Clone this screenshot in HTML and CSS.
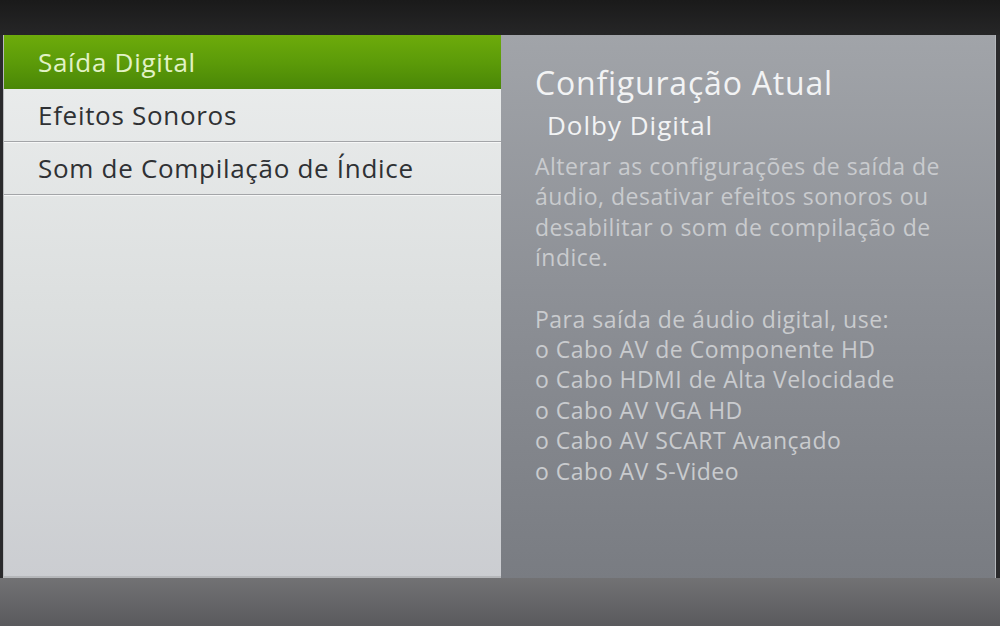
FILE: index.html
```html
<!DOCTYPE html>
<html lang="pt">
<head>
  <meta charset="UTF-8" />
  <title>Configurações de Áudio</title>
  <link rel="stylesheet" href="styles.css">
</head>
<body>

<div class="top-band"></div>

<main class="panel">
  <ul class="menu">
    <li class="menu-item active">Saída Digital</li>
    <li class="menu-item">Efeitos Sonoros</li>
    <li class="menu-item">Som de Compilação de Índice</li>
  </ul>

  <section class="details">
    <h2>Configuração Atual</h2>
    <p class="current">Dolby Digital</p>
    <p class="desc">Alterar as configurações de saída de áudio, desativar efeitos sonoros ou desabilitar o som de compilação de índice.</p>
    <p class="desc">
      Para saída de áudio digital, use:<br>
      o Cabo AV de Componente HD<br>
      o Cabo HDMI de Alta Velocidade<br>
      o Cabo AV VGA HD<br>
      o Cabo AV SCART Avançado<br>
      o Cabo AV S-Video
    </p>
  </section>
</main>

<div class="bottom-band"></div>

</body>
</html>
```

FILE: styles.css
```css
* {
  box-sizing: border-box;
  margin: 0;
  padding: 0;
}

body {
  width: 1000px;
  height: 626px;
  overflow: hidden;
  font-family: 'Open Sans', 'DejaVu Sans', sans-serif;
  background: #1f1f20;
}

.top-band {
  height: 35px;
  background: linear-gradient(#1a1a1a, #262627);
}

.panel {
  display: flex;
  height: 543px;
  padding-left: 3px;
  padding-right: 4px;
  background: #2a2a2c;
}

/* left list */
.menu {
  list-style: none;
  width: 498px;
  background: linear-gradient(#eceeee, #dcdfdf 50%, #cbcdd1);
  border-left: 1px solid #b8babc;
  box-shadow: inset 0 -2px 0 #b5b7ba;
}

.menu-item {
  height: 53px;
  line-height: 52px;
  padding-left: 34px;
  font-size: 26px;
  letter-spacing: 0.7px;
  color: #2f3134;
  border-bottom: 1px solid #a3a5a8;
  box-shadow: 0 1px 0 #f6f7f7;
}

.menu-item.active {
  height: 54px;
  line-height: 54px;
  background: linear-gradient(#6dab0b, #5c9b09 50%, #4a8707);
  color: #e2f2c6;
  border-bottom: none;
  box-shadow: none;
}

/* right side */
.details {
  flex: 1;
  padding: 28px 40px 0 34px;
  background: linear-gradient(#a1a4a9, #8c8f95 50%, #797c82);
  border-right: 1px solid #b3b6ba;
  color: #c9cbce;
}

.details h2 {
  font-weight: normal;
  font-size: 32px;
  letter-spacing: 0.8px;
  line-height: 40px;
  color: #f2f3f4;
}

.details .current {
  margin-top: 7px;
  padding-left: 12px;
  font-size: 26px;
  letter-spacing: 1px;
  line-height: 30px;
  color: #f2f3f4;
}

.desc {
  margin-top: 11px;
  margin-bottom: 20px;
  font-size: 23px;
  letter-spacing: 0.5px;
  line-height: 30.4px;
}

.desc + .desc {
  margin-top: 0;
  padding-top: 11px;
}

.bottom-band {
  height: 48px;
  background: linear-gradient(#727274, #5a5a5d);
}
```
